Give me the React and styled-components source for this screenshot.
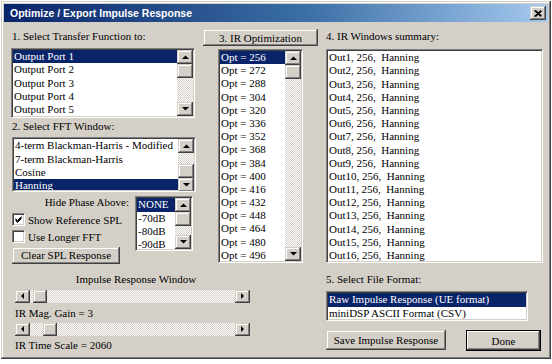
import React from "react";
import styled, { createGlobalStyle } from "styled-components";

const FACE = "#d4d0c8";
const NAVY = "#0a246a";

const raised = `
  box-shadow: inset -1px -1px #404040, inset 1px 1px ${FACE},
    inset -2px -2px #808080, inset 2px 2px #fff;
`;

const Global = createGlobalStyle`
  html, body { margin: 0; padding: 0; background: #fff; }
  body {
    font-family: "Liberation Serif", "Times New Roman", serif;
    font-size: 11px;
    color: #000;
  }
`;

const Window = styled.div`
  box-sizing: border-box;
  margin: 1px 0 0 1px;
  width: 550px;
  height: 358px;
  padding: 3px;
  background: ${FACE};
  ${raised}
  display: flex;
  flex-direction: column;
`;

const TitleBar = styled.div`
  height: 18px;
  flex: none;
  display: flex;
  align-items: center;
  justify-content: space-between;
  padding: 0 2px 0 6px;
  background: linear-gradient(90deg, ${NAVY} 0%, #3a6ea5 55%, #a6caf0 100%);
  color: #fff;
  font-family: "Liberation Sans", Arial, sans-serif;
  font-weight: bold;
  font-size: 10.5px;
`;

const CloseBtn = styled.div`
  width: 16px;
  height: 14px;
  background: ${FACE};
  ${raised}
  display: flex;
  align-items: center;
  justify-content: center;
`;

const Body = styled.div`
  flex: 1;
  display: grid;
  grid-template-columns: 185px 115px 217px;
  grid-template-rows: auto 1fr;
  column-gap: 7px;
  padding: 7px 0 0 7px;
`;

const Col = styled.div`
  display: flex;
  flex-direction: column;
  align-items: flex-start;
  min-width: 0;
`;

const LeftTop = styled(Col)`
  grid-area: 1 / 1;
`;

const Mid = styled(Col)`
  grid-area: 1 / 2;
`;

const Right = styled(Col)`
  grid-area: 1 / 3 / 3 / 4;
  margin-left: 1px;
`;

const BottomLeft = styled(Col)`
  grid-area: 2 / 1 / 3 / 3;
`;

const Label = styled.div`
  height: 13.2px;
  line-height: 13.2px;
  white-space: nowrap;
  margin-top: ${(p) => p.$mt || 0}px;
  margin-left: ${(p) => p.$ml || 0}px;
  padding-right: ${(p) => (p.$right ? 2 : 0)}px;
  width: ${(p) => (p.$w ? `${p.$w}px` : "auto")};
  text-align: ${(p) => (p.$center ? "center" : p.$right ? "right" : "left")};
`;

const ListBox = styled.div`
  box-sizing: border-box;
  flex: none;
  width: ${(p) => p.$w}px;
  height: ${(p) => p.$h}px;
  margin-top: ${(p) => p.$mt || 0}px;
  margin-left: ${(p) => p.$ml || 0}px;
  background: #fff;
  border: 1px solid;
  border-color: #808080 #fff #fff #808080;
  box-shadow: inset 1px 1px #404040, inset -1px -1px ${FACE};
  padding: 1px;
  display: flex;
  overflow: hidden;
`;

const Items = styled.div`
  flex: 1;
  min-width: 0;
  overflow: hidden;
`;

const Item = styled.div`
  height: 13.2px;
  line-height: 13.2px;
  padding-left: 1px;
  white-space: pre;
  overflow: hidden;
  background: ${(p) => (p.$sel ? NAVY : "transparent")};
  color: ${(p) => (p.$sel ? "#fff" : "#000")};
`;

const VBar = styled.div`
  width: 16px;
  flex: none;
  display: flex;
  flex-direction: column;
`;

const HBar = styled.div`
  box-sizing: border-box;
  width: 235px;
  height: 13px;
  margin: ${(p) => p.$mt || 0}px 0 0 4px;
  display: flex;
`;

const ArrowBtn = styled.div`
  flex: none;
  width: ${(p) => (p.$h ? 15 : 16)}px;
  height: ${(p) => (p.$h ? 13 : 14)}px;
  background: ${FACE};
  ${raised}
  display: flex;
  align-items: center;
  justify-content: center;
`;

const Track = styled.div`
  flex: 1;
  display: flex;
  flex-direction: ${(p) => (p.$h ? "row" : "column")};
  background: repeating-conic-gradient(${FACE} 0 25%, #fff 0 50%) 0 0 / 2px 2px;
`;

const Thumb = styled.div`
  flex: none;
  width: ${(p) => (p.$h ? 14 : 16)}px;
  height: ${(p) => (p.$h ? 13 : 14)}px;
  margin-top: ${(p) => (p.$h ? 0 : p.$off)}px;
  margin-left: ${(p) => (p.$h ? p.$off : 0)}px;
  background: ${FACE};
  ${raised}
`;

const Button = styled.div`
  box-sizing: border-box;
  flex: none;
  width: ${(p) => p.$w}px;
  height: ${(p) => p.$hgt || 17}px;
  margin-top: ${(p) => p.$mt || 0}px;
  margin-left: ${(p) => p.$ml || 0}px;
  display: flex;
  align-items: center;
  justify-content: center;
  white-space: nowrap;
  background: ${FACE};
  ${raised}
  ${(p) =>
    p.$default &&
    `border: 1px solid #000;
     box-shadow: inset -1px -1px #404040, inset 1px 1px #fff, inset -2px -2px #808080;`}
`;

const HideRow = styled.div`
  display: flex;
  align-items: flex-start;
  margin-top: 4px;
`;

const HideLeft = styled.div`
  width: 120px;
  display: flex;
  flex-direction: column;
`;

const CheckRow = styled.label`
  display: flex;
  align-items: center;
  gap: 3px;
  height: 16px;
  padding-left: 1px;
  margin-top: ${(p) => p.$mt || 0}px;
  white-space: nowrap;
`;

const CheckBox = styled.span`
  box-sizing: border-box;
  width: 13px;
  height: 13px;
  background: #fff;
  border: 1px solid;
  border-color: #808080 #fff #fff #808080;
  box-shadow: inset 1px 1px #404040, inset -1px -1px ${FACE};
  display: flex;
  align-items: center;
  justify-content: center;
`;

const ButtonRow = styled.div`
  display: flex;
  gap: 20px;
  margin-top: 9px;
`;

const Tri = ({ dir }) => {
  const pts = {
    up: "0,4 7,4 3.5,0.5",
    down: "0,0 7,0 3.5,3.5",
    left: "3,0 3,6 0,3",
    right: "0,0 0,6 3,3",
  }[dir];
  const h = dir === "left" || dir === "right";
  return (
    <svg width={h ? 3 : 7} height={h ? 6 : 4} viewBox={h ? "0 0 3 6" : "0 0 7 4"}>
      <polygon points={pts} fill="#000" />
    </svg>
  );
};

const VScroll = ({ thumb }) => (
  <VBar>
    <ArrowBtn>
      <Tri dir="up" />
    </ArrowBtn>
    <Track>
      <Thumb $off={thumb} />
    </Track>
    <ArrowBtn>
      <Tri dir="down" />
    </ArrowBtn>
  </VBar>
);

const HScroll = ({ thumb, mt }) => (
  <HBar $mt={mt}>
    <ArrowBtn $h>
      <Tri dir="left" />
    </ArrowBtn>
    <Track $h>
      <Thumb $h $off={thumb} />
    </Track>
    <ArrowBtn $h>
      <Tri dir="right" />
    </ArrowBtn>
  </HBar>
);

const List = ({ items, sel, w, h, mt, ml, thumb }) => (
  <ListBox $w={w} $h={h} $mt={mt} $ml={ml}>
    <Items>
      {items.map((t, i) => (
        <Item key={i} $sel={i === sel}>
          {t}
        </Item>
      ))}
    </Items>
    {thumb !== undefined && <VScroll thumb={thumb} />}
  </ListBox>
);

const ports = [1, 2, 3, 4, 5].map((n) => `Output Port ${n}`);
const windows = [
  "4-term Blackman-Harris - Modified",
  "7-term Blackman-Harris",
  "Cosine",
  "Hanning",
];
const phases = ["NONE", "-70dB", "-80dB", "-90dB"];
const opts = Array.from({ length: 16 }, (_, i) => `Opt = ${256 + i * 16}`);
const summary = Array.from({ length: 16 }, (_, i) => `Out${i + 1}, 256,  Hanning`);
const formats = ["Raw Impulse Response (UE format)", "miniDSP ASCII Format (CSV)"];

const App = () => (
  <>
    <Global />
    <Window>
      <TitleBar>
        <span>Optimize / Export Impulse Response</span>
        <CloseBtn>
          <svg width="8" height="7" viewBox="0 0 8 7">
            <path d="M0.5 0.5 L7 6.5 M1.5 0.5 L7.5 6 M7 0.5 L0.5 6.5 M7.5 1 L1.5 6.5" stroke="#000" strokeWidth="1.1" />
          </svg>
        </CloseBtn>
      </TitleBar>
      <Body>
        <LeftTop>
          <Label $mt={1} $ml={1}>1. Select Transfer Function to:</Label>
          <List items={ports} sel={0} w={184} h={70} mt={5} thumb={0} />
          <Label $mt={2} $ml={1}>2. Select FFT Window:</Label>
          <List items={windows} sel={3} w={184} h={55} mt={4} ml={1} thumb={11} />
          <HideRow>
            <HideLeft>
              <Label $right>Hide Phase Above:</Label>
              <CheckRow $mt={2}>
                <CheckBox>
                  <svg width="7" height="7" viewBox="0 0 7 7">
                    <path d="M0.5 2.5 L2.5 4.5 L6.5 0.5 M0.5 3.5 L2.5 5.5 L6.5 1.5 M0.5 4.5 L2.5 6.5 L6.5 2.5" stroke="#000" strokeWidth="1" fill="none" />
                  </svg>
                </CheckBox>
                Show Reference SPL
              </CheckRow>
              <CheckRow $mt={1}>
                <CheckBox />
                Use Longer FFT
              </CheckRow>
              <Button $w={108} $mt={2} $ml={1}>Clear SPL Response</Button>
            </HideLeft>
            <List items={phases} sel={0} w={58} h={55} ml={4} thumb={0} />
          </HideRow>
        </LeftTop>

        <Mid>
          <Button $w={115}>3. IR Optimization</Button>
          <List items={opts} sel={0} w={85} h={214} mt={3} ml={15} thumb={0} />
        </Mid>

        <Right>
          <Label $mt={1}>4. IR Windows summary:</Label>
          <List items={summary} w={217} h={214} mt={6} />
          <Label $mt={10}>5. Select File Format:</Label>
          <List items={formats} sel={0} w={202} h={30} mt={5} />
          <ButtonRow>
            <Button $w={120} $hgt={20}>Save Impulse Response</Button>
            <Button $w={75} $hgt={21} $default>Done</Button>
          </ButtonRow>
        </Right>

        <BottomLeft>
          <Label $center $mt={9} $w={250}>Impulse Response Window</Label>
          <HScroll thumb={3} mt={4} />
          <Label $mt={4} $ml={4}>IR Mag. Gain = 3</Label>
          <HScroll thumb={13} mt={3} />
          <Label $mt={3} $ml={4}>IR Time Scale = 2060</Label>
        </BottomLeft>
      </Body>
    </Window>
  </>
);

export default App;
